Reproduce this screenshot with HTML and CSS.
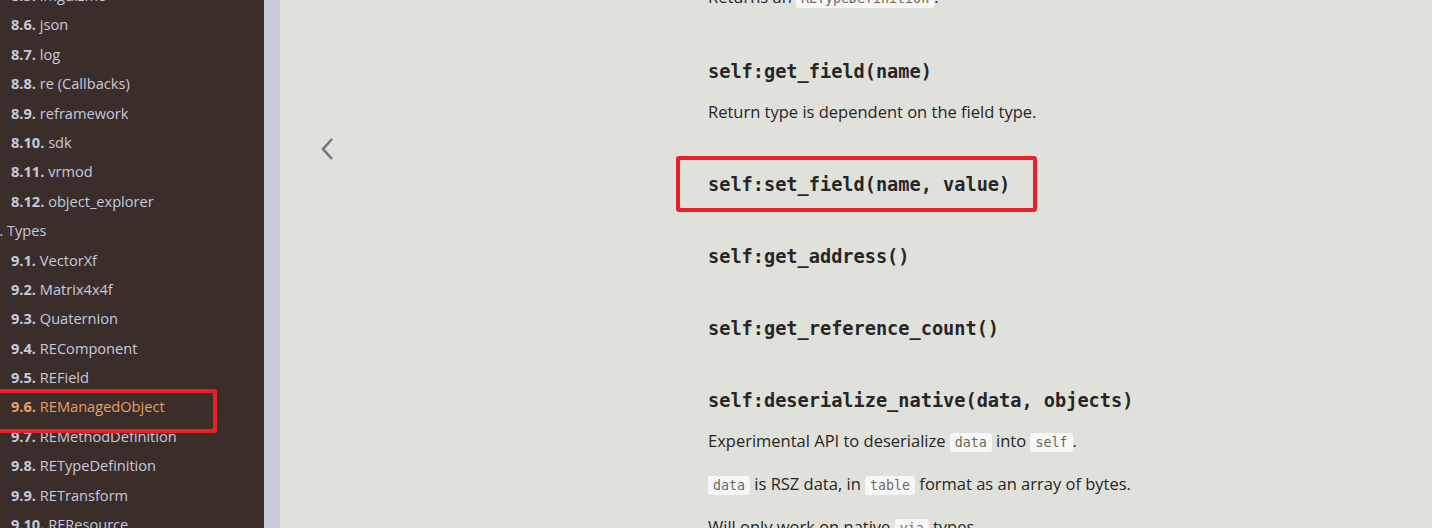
FILE: index.html
```html
<!DOCTYPE html>
<html>
<head>
<meta charset="utf-8">
<link rel="stylesheet" href="styles.css">
</head>
<body>
<div class="page">
  <nav class="sidebar">
    <ol class="toc">
      <li class="sub"><b>8.5.</b> imguizmo</li>
      <li class="sub"><b>8.6.</b> json</li>
      <li class="sub"><b>8.7.</b> log</li>
      <li class="sub"><b>8.8.</b> re (Callbacks)</li>
      <li class="sub"><b>8.9.</b> reframework</li>
      <li class="sub"><b>8.10.</b> sdk</li>
      <li class="sub"><b>8.11.</b> vrmod</li>
      <li class="sub"><b>8.12.</b> object_explorer</li>
      <li class="top">9. Types</li>
      <li class="sub"><b>9.1.</b> VectorXf</li>
      <li class="sub"><b>9.2.</b> Matrix4x4f</li>
      <li class="sub"><b>9.3.</b> Quaternion</li>
      <li class="sub"><b>9.4.</b> REComponent</li>
      <li class="sub"><b>9.5.</b> REField</li>
      <li class="sub active"><b>9.6.</b> REManagedObject</li>
      <li class="sub"><b>9.7.</b> REMethodDefinition</li>
      <li class="sub"><b>9.8.</b> RETypeDefinition</li>
      <li class="sub"><b>9.9.</b> RETransform</li>
      <li class="sub"><b>9.10.</b> REResource</li>
    </ol>
    <div class="mark mark-side"></div>
  </nav>
  <div class="strip"></div>
  <div class="navcol">
    <svg class="chev" width="14" height="24" viewBox="0 0 14 24"><polyline points="12,2 3,12 12,22" fill="none" stroke="#737480" stroke-width="2.6"/></svg>
  </div>
  <main class="content">
    <p>Returns an <code>RETypeDefinition</code>.</p>
    <h3>self:get_field(name)</h3>
    <p>Return type is dependent on the field type.</p>
    <h3>self:set_field(name, value)<span class="mark mark-main"></span></h3>
    <h3>self:get_address()</h3>
    <h3>self:get_reference_count()</h3>
    <h3>self:deserialize_native(data, objects)</h3>
    <p>Experimental API to deserialize <code>data</code> into <code>self</code>.</p>
    <p><code>data</code> is RSZ data, in <code>table</code> format as an array of bytes.</p>
    <p>Will only work on native <code>via</code> types.</p>
  </main>
</div>
</body>
</html>
```
FILE: styles.css
```css
html, body {
  margin: 0;
  padding: 0;
  width: 1432px;
  height: 528px;
  overflow: hidden;
  background: #e1e1db;
}
.page {
  display: flex;
  height: 528px;
  overflow: hidden;
}
.sidebar {
  position: relative;
  width: 264px;
  flex: none;
  background: #3b2e2a;
  overflow: hidden;
  font-family: "Open Sans", "Noto Sans", sans-serif;
  font-size: 14.6px;
  color: #c8c9db;
}
.toc {
  list-style: none;
  margin: -19px 0 0 0;
  padding: 0;
}
.toc li {
  line-height: 29.4px;
  height: 29.4px;
  white-space: nowrap;
}
.toc li b {
  font-weight: 700;
}
.toc .sub {
  padding-left: 11px;
}
.toc .top {
  margin-left: -9px;
}
.toc .active {
  color: #e69f67;
}
.strip {
  width: 16px;
  flex: none;
  background: #c8c9db;
}
.navcol {
  width: 428px;
  flex: none;
  padding: 137px 0 0 40px;
  box-sizing: border-box;
}
.chev {
  display: block;
}
.content {
  display: flex;
  flex-direction: column;
  margin-top: -15px;
  font-family: "Open Sans", "Noto Sans", sans-serif;
  font-size: 16.5px;
  color: #262625;
}
.content p {
  margin: 17px 0 0 0;
  line-height: 24px;
  white-space: nowrap;
}
.content p:first-child {
  margin-top: 0;
}
.content h3 {
  position: relative;
  margin: 42px 0 0 0;
  line-height: 30px;
  font-family: "DejaVu Sans Mono", "Liberation Mono", monospace;
  font-size: 18.6px;
  font-weight: 700;
  color: #262625;
  white-space: nowrap;
}
.content p + h3 {
  margin-top: 46px;
}
.content h3 + p {
  margin-top: 13px;
}
code {
  font-family: "DejaVu Sans Mono", "Liberation Mono", monospace;
  font-size: 13.3px;
  background: #f6f7f6;
  color: #6e6b5e;
  padding: 2px 5px;
  border-radius: 3px;
}
.mark {
  position: absolute;
  border: 4px solid #e8202a;
  border-radius: 3px;
  box-sizing: border-box;
  pointer-events: none;
}
.mark-side {
  left: -4px;
  top: 389px;
  width: 221px;
  height: 44px;
}
.mark-main {
  left: -32px;
  top: -14px;
  width: 361px;
  height: 56px;
}
```
